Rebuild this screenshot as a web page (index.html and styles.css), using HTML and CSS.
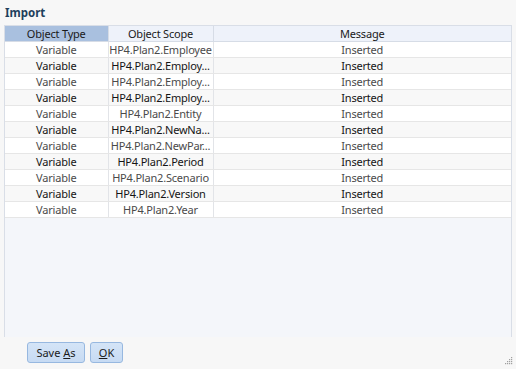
FILE: index.html
```html
<!DOCTYPE html>
<html>
<head>
<meta charset="utf-8">
<link rel="stylesheet" href="styles.css">
</head>
<body>
<div class="dialog">
  <div class="title">Import</div>
  <div class="panel">
    <table class="grid">
      <colgroup><col class="c1"><col class="c2"><col class="c3"></colgroup>
      <thead>
        <tr><th class="sel">Object Type</th><th>Object Scope</th><th>Message</th></tr>
      </thead>
      <tbody>
        <tr class="odd"><td>Variable</td><td>HP4.Plan2.Employee</td><td>Inserted</td></tr>
        <tr class="even"><td>Variable</td><td>HP4.Plan2.Employ...</td><td>Inserted</td></tr>
        <tr class="odd"><td>Variable</td><td>HP4.Plan2.Employ...</td><td>Inserted</td></tr>
        <tr class="even"><td>Variable</td><td>HP4.Plan2.Employ...</td><td>Inserted</td></tr>
        <tr class="odd"><td>Variable</td><td>HP4.Plan2.Entity</td><td>Inserted</td></tr>
        <tr class="even"><td>Variable</td><td>HP4.Plan2.NewNa...</td><td>Inserted</td></tr>
        <tr class="odd"><td>Variable</td><td>HP4.Plan2.NewPar...</td><td>Inserted</td></tr>
        <tr class="even"><td>Variable</td><td>HP4.Plan2.Period</td><td>Inserted</td></tr>
        <tr class="odd"><td>Variable</td><td>HP4.Plan2.Scenario</td><td>Inserted</td></tr>
        <tr class="even"><td>Variable</td><td>HP4.Plan2.Version</td><td>Inserted</td></tr>
        <tr class="odd"><td>Variable</td><td>HP4.Plan2.Year</td><td>Inserted</td></tr>
      </tbody>
    </table>
  </div>
  <div class="footer">
    <button class="btn save">Save <u>A</u>s</button>
    <button class="btn ok"><u>O</u>K</button>
    <svg class="grip" width="9" height="9" viewBox="0 0 9 9">
      <g fill="#a0a0a0">
        <rect x="7" y="0" width="1.2" height="1.2"/>
        <rect x="5" y="2" width="1.2" height="1.2"/><rect x="7" y="2" width="1.2" height="1.2"/>
        <rect x="3" y="4" width="1.2" height="1.2"/><rect x="5" y="4" width="1.2" height="1.2"/><rect x="7" y="4" width="1.2" height="1.2"/>
        <rect x="1" y="6" width="1.2" height="1.2"/><rect x="3" y="6" width="1.2" height="1.2"/><rect x="5" y="6" width="1.2" height="1.2"/><rect x="7" y="6" width="1.2" height="1.2"/>
      </g>
    </svg>
  </div>
</div>
</body>
</html>
```
FILE: styles.css
```css
html, body {
  margin: 0;
  padding: 0;
}
body {
  width: 516px;
  height: 369px;
  background: #f7f7f7;
  font-family: "Noto Sans", "DejaVu Sans", sans-serif;
  font-size: 11px;
  overflow: hidden;
}
.dialog {
  display: flex;
  flex-direction: column;
  height: 369px;
}
.title {
  height: 25px;
  box-sizing: border-box;
  padding: 5px 0 0 5px;
  font-weight: bold;
  font-size: 11.5px;
  color: #1e3f5c;
  line-height: 15px;
}
.panel {
  margin: 0 4px 0 4px;
  height: 312px;
  box-sizing: border-box;
  background: #f4f6fa;
  border: 1px solid #d9dee7;
  border-bottom: none;
}
.grid {
  border-collapse: collapse;
  table-layout: fixed;
  width: 100%;
}
.c1 { width: 103px; }
.c2 { width: 105px; }
.grid th, .grid td {
  height: 15px;
  padding: 0;
  line-height: 15px;
  text-align: center;
  white-space: nowrap;
  overflow: hidden;
  font-weight: normal;
  letter-spacing: -0.2px;
  border-right: 1px solid #e2e4e8;
  border-bottom: 1px solid #e6e6e6;
}
.grid th:last-child, .grid td:last-child {
  border-right: none;
}
.grid th {
  background: #eef2fa;
  color: #1a1a1a;
  border-bottom: 1px solid #d6dce6;
  border-right: 1px solid #d6dce6;
}
.grid th.sel {
  background: #a9c0df;
}
.odd td {
  background: #ffffff;
  color: #4a4a4a;
}
.even td {
  background: #f8f8f8;
  color: #151515;
}
.footer {
  position: relative;
  flex: 1;
  display: flex;
  align-items: flex-start;
  gap: 5px;
  padding: 5px 0 0 27px;
}
.btn {
  height: 21px;
  box-sizing: border-box;
  padding: 0;
  background: linear-gradient(#d4e4f7, #c7dbf3);
  border: 1px solid #97b8e0;
  border-radius: 3px;
  font-family: "Noto Sans", "DejaVu Sans", sans-serif;
  font-size: 11px;
  color: #1a1a1a;
}
.save { width: 58px; }
.ok { width: 33px; }
.grip {
  position: absolute;
  right: 3px;
  bottom: 3px;
}
```
